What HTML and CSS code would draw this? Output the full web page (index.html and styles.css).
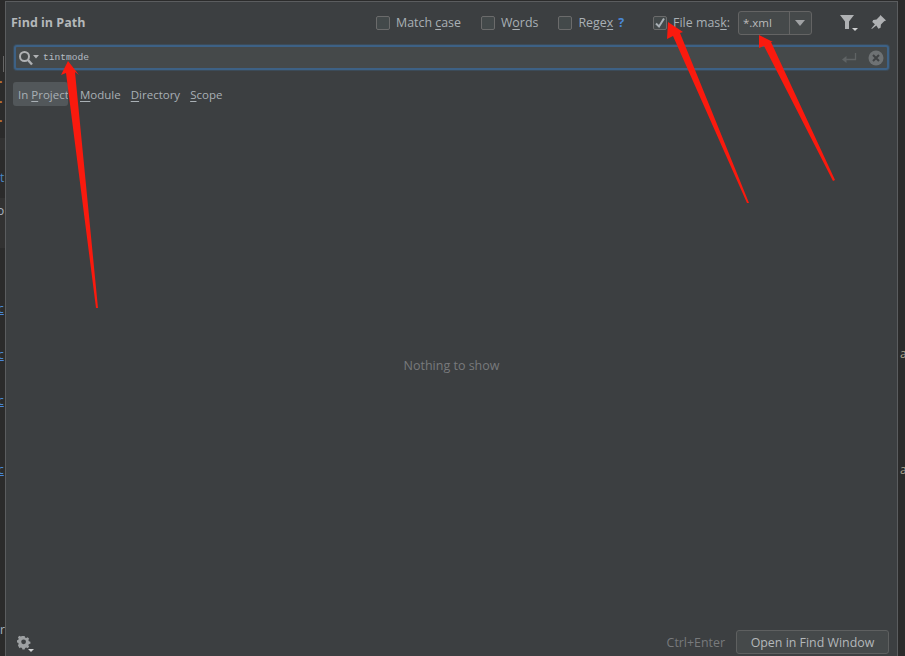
FILE: index.html
```html
<!DOCTYPE html>
<html lang="en">
<head>
<meta charset="utf-8">
<title>Find in Path</title>
<link rel="stylesheet" href="styles.css">
</head>
<body>
<div class="editor-left">
  <div class="band b1"></div>
  <div class="band b2"></div>
  <div class="bracket"></div>
  <span class="frag orange f1">.</span>
  <span class="frag orange f2">.</span>
  <span class="frag orange f3">.</span>
  <span class="frag blue f4">t</span>
  <span class="frag light f5">o</span>
  <span class="frag link f6">c</span>
  <span class="frag link f7">c</span>
  <span class="frag link f8">c</span>
  <span class="frag link f9">c</span>
  <span class="frag light f10">r</span>
</div>
<main class="dialog">
  <header class="top">
    <h1 class="title">Find in Path</h1>
    <div class="options">
      <label class="check c1"><span class="box"></span><span>Match <u>c</u>ase</span></label>
      <label class="check c2"><span class="box"></span><span>W<u>o</u>rds</span></label>
      <label class="check c3"><span class="box"></span><span>Rege<u>x</u></span><b class="help">?</b></label>
      <label class="check mask"><span class="box on"><svg width="12" height="12" viewBox="0 0 12 12"><path d="M2 6.500l3 3 5-8" fill="none" stroke="#a9b0b5" stroke-width="2"/></svg></span><span>File mas<u>k</u>:</span></label>
      <div class="combo"><span class="combo-value">*.xml</span><span class="combo-btn"><i class="caret"></i></span></div>
    </div>
    <div class="tools">
      <svg width="20" height="20" viewBox="0 0 20 20"><path d="M1 2h14l-5 6.500V16H6V8.500z" fill="#afb1b3"/><path d="M13 15h6l-3 3z" fill="#d0d2d3"/></svg>
      <svg width="17" height="17" viewBox="0 0 18 18"><path d="M11 1l6 6-2 .6-3.400 3.400-.4 3.500-2.300 1-2.200-3.300L2 16l-.6-.6 3.800-4.500L2.400 8.600l1-2.300 3.500-.4L10.300 2.500z" fill="#afb1b3"/></svg>
    </div>
  </header>
  <div class="search">
    <svg class="glass" width="22" height="16" viewBox="0 0 22 16"><circle cx="6.500" cy="6.500" r="4.500" fill="none" stroke="#afb1b3" stroke-width="2"/><path d="M10 10l4 4.500" stroke="#afb1b3" stroke-width="2.400"/><path d="M15 5h6l-3 3.500z" fill="#afb1b3"/></svg>
    <span class="query">tintmode</span>
    <svg class="enter" width="16" height="12" viewBox="0 0 16 12"><path d="M14.500 1v6.500H3" fill="none" stroke="#5f6364" stroke-width="1.300"/><path d="M1 7.500L5.500 4v7z" fill="#5f6364"/></svg>
    <svg class="clear" width="16" height="16" viewBox="0 0 16 16"><circle cx="8" cy="8" r="7.500" fill="#6e7274"/><path d="M5 5l6 6M11 5l-6 6" stroke="#3f4244" stroke-width="2"/></svg>
  </div>
  <nav class="scopes">
    <span class="scope active">In <u>P</u>roject</span>
    <span class="scope"><u>M</u>odule</span>
    <span class="scope"><u>D</u>irectory</span>
    <span class="scope"><u>S</u>cope</span>
  </nav>
  <div class="empty">Nothing to show</div>
  <footer class="bottom">
    <svg class="gear" width="18" height="17" viewBox="0 0 18 17"><path d="M6 1h2.500l.4 1.700 1.400.6 1.500-.9 1.700 1.700-.9 1.500.6 1.400 1.700.4v2.300l-1.700.4-.6 1.400.9 1.500-1.700 1.700-1.500-.9-1.400.6-.4 1.600H6l-.4-1.600-1.400-.6-1.500.9L1 11.500l.9-1.500-.6-1.400L0 8.200V5.900l1.300-.4.600-1.400L1 2.600 2.700.9l1.500.9 1.400-.6z" transform="scale(.9)" fill="#9da0a2"/><circle cx="6.600" cy="6.800" r="2.400" fill="#3c3f41"/><path d="M11 14h6l-3 3z" fill="#d0d2d3"/></svg>
    <span class="shortcut">Ctrl+Enter</span>
    <button class="open" type="button">Open in Find Window</button>
  </footer>
</main>
<div class="editor-right">
  <span class="frag tan r1">a</span>
  <span class="frag tan r2">a</span>
</div>
<svg class="arrows" width="905" height="656" viewBox="0 0 905 656">
  <path d="M68 61L61 75 66 73 96 308 98 308 75 72 79 75z" fill="#fa1a0e"/>
  <path d="M668 22L667 39 673 36 747 203 749 203 680 33 683 32z" fill="#fa1a0e"/>
  <path d="M759 35L759 48 764 46 833 181 835 180 771 42 773 42z" fill="#fa1a0e"/>
</svg>
</body>
</html>
```
FILE: styles.css
```css
* { box-sizing: border-box; }
html, body { margin: 0; height: 100%; }
body {
  width: 905px;
  height: 656px;
  overflow: hidden;
  display: flex;
  background: #2b2b2b;
  font-family: "Open Sans", "Noto Sans", sans-serif;
  font-size: 12.400px;
  color: #a9b0b5;
}
u { text-underline-offset: 2px; text-decoration-thickness: 1px; }
.editor-left { position: relative; width: 5px; flex: none; overflow: hidden; }
.editor-right { position: relative; width: 7px; flex: none; overflow: hidden; }
.band { position: absolute; left: 0; width: 100%; background: #323232; }
.b1 { top: 138px; height: 12px; }
.b2 { top: 198px; height: 50px; }
.bracket { position: absolute; left: 3px; top: 56px; width: 2px; height: 16px; border-left: 1px solid #666; }
.frag { position: absolute; font-size: 12px; line-height: 12px; }
.orange { color: #cc7832; font-weight: 700; }
.blue { color: #4a88c7; }
.light { color: #a9b7c6; }
.link { color: #4a88d7; text-decoration: underline; left: -2px; }
.tan { color: #b0a58e; left: 2px; }
.f1 { top: 73px; left: -1px; }
.f2 { top: 93px; left: -1px; }
.f3 { top: 112px; left: -1px; }
.f4 { top: 172px; left: 0; }
.f5 { top: 205px; left: -3px; }
.f6 { top: 303px; }
.f7 { top: 349px; }
.f8 { top: 395px; }
.f9 { top: 464px; }
.f10 { top: 624px; left: 0; }
.r1 { top: 348px; }
.r2 { top: 464px; }

.dialog {
  width: 893px;
  flex: none;
  margin-top: 1px;
  background: #3c3f41;
  border: 1px solid #5b5d5f;
  border-bottom: 0;
  display: flex;
  flex-direction: column;
}
.top {
  display: flex;
  align-items: center;
  height: 41px;
  padding: 0 10px 0 5px;
}
.title { margin: 0; font-size: 12.500px; font-weight: 700; color: #b4b8ba; width: 365px; }
.options { display: flex; align-items: center; }
.check { display: flex; align-items: center; gap: 6px; white-space: nowrap; }
.c1 { margin-right: 20px; }
.c2 { margin-right: 20px; }
.c3 { margin-right: 29px; }
.box {
  width: 14px; height: 14px; flex: none;
  border: 1px solid #6b6b6b; border-radius: 2px;
  background: #43494a;
  display: flex;
  align-items: center;
  justify-content: center;
}
.help { color: #4a88d7; margin-left: -1px; }
.mask { margin-right: 8px; }
.combo {
  display: flex;
  width: 74px; height: 24px;
  border: 1px solid #646464; border-radius: 3px;
  background: #45494a;
  color: #bbbbbb;
  align-items: center;
}
.combo-value { flex: 1; padding-left: 4px; font-size: 11.500px; }
.combo-btn { width: 22px; height: 100%; border-left: 1px solid #646464; display: flex; align-items: center; justify-content: center; }
.caret { border: 5px solid transparent; border-top: 6px solid #a0a2a4; border-bottom: 0; }
.tools { margin-left: auto; display: flex; align-items: center; gap: 11px; }

.search {
  height: 25px;
  margin: 2px 8px 0 8px;
  border: 2px solid #3d6185;
  border-radius: 3px;
  background: #45494a;
  box-shadow: 0 0 0 1px rgba(61, 97, 133, .35);
  display: flex;
  align-items: center;
  padding: 0 3px 0 2px;
}
.query { font-family: "Liberation Mono", monospace; font-size: 9.600px; color: #b4bcc4; margin-left: 3px; flex: 1; }
.enter { margin-right: 11px; }
.scopes { display: flex; align-items: center; margin: 12px 0 0 7px; height: 24px; font-size: 11.500px; }
.scope { line-height: 26px; height: 24px; margin-right: 10px; }
.scope.active { background: #52575a; border-radius: 3px; padding: 0 0 0 5px; width: 55px; margin-right: 12px; white-space: nowrap; overflow: hidden; }
.empty { flex: 1; display: flex; align-items: center; justify-content: center; color: #787a7c; padding-top: 9px; font-size: 12.500px; }
.bottom { height: 40px; display: flex; align-items: flex-end; padding: 0 8px 2px 11px; }
.gear { margin-bottom: 2px; }
.shortcut { margin-left: auto; color: #787a7c; margin-bottom: 3px; }
.open {
  margin: 0 0 0 11px;
  width: 153px; height: 24px;
  background: #45494a;
  border: 1px solid #5e6060;
  border-radius: 3px;
  color: #b4b8ba;
  font: inherit;
  padding: 0;
}
.arrows { position: absolute; left: 0; top: 0; pointer-events: none; }
```
